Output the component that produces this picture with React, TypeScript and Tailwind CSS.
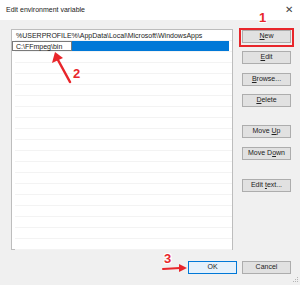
const rows = Array.from({ length: 20 });

const sideButtons: { label: React.ReactNode; mt: string }[] = [
  { label: <><u>N</u>ew</>, mt: "mt-[1px]" },
  { label: <><u>E</u>dit</>, mt: "mt-[8px]" },
  { label: <><u>B</u>rowse...</>, mt: "mt-[9px]" },
  { label: <><u>D</u>elete</>, mt: "mt-[8px]" },
  { label: <>Move <u>U</u>p</>, mt: "mt-[18px]" },
  { label: <>Move D<u>o</u>wn</>, mt: "mt-[9px]" },
  { label: <>Edit <u>t</u>ext...</>, mt: "mt-[19px]" },
];

function Btn({ children, className = "" }: { children: React.ReactNode; className?: string }) {
  return (
    <div
      className={`h-[13px] w-[49px] flex items-center justify-center border border-[#adadad] bg-[#e1e1e1] text-[7px] text-[#222] ${className}`}
    >
      <span className="whitespace-pre">{children}</span>
    </div>
  );
}

function Num({ n, className }: { n: string; className: string }) {
  return (
    <span
      className={`absolute text-[13px] font-bold leading-none text-[#e8262b] ${className}`}
      style={{ textShadow: "1px 1px 0 #fff, -1px -1px 0 #fff, 1px -1px 0 #fff, -1px 1px 0 #fff" }}
    >
      {n}
    </span>
  );
}

export default function App() {
  return (
    <div
      className="relative w-[300px] h-[285px] overflow-hidden bg-[#f0f0f0] text-[#222]"
      style={{ fontFamily: '"Liberation Sans", Arial, sans-serif' }}
    >
      {/* title bar */}
      <div className="h-[20px] bg-white flex items-center justify-between pl-[6px] pr-[7px]">
        <span className="text-[7px]">Edit environment variable</span>
        <span className="text-[10px] leading-none text-[#444]">✕</span>
      </div>

      <div className="flex pl-[11px] pt-[9px]">
        {/* list */}
        <div className="w-[222px] h-[221px] border border-[#bdbdbd] bg-white flex flex-col">
          {rows.map((_, i) => (
            <div key={i} className="h-[11px] shrink-0 border-b border-[#f3f3f3] ml-[3px] flex items-center">
              {i === 0 && (
                <span className="text-[7px] pl-[1px] leading-none">%USERPROFILE%\AppData\Local\Microsoft\WindowsApps</span>
              )}
              {i === 1 && (
                <div className="flex w-full h-[10px] -ml-[3px]">
                  <div className="w-[60px] h-full border border-[#7a7a7a] bg-white flex items-center pl-[3px] text-[7px] leading-none">
                    C:\FFmpeg\bin
                  </div>
                  <div className="flex-1 bg-[#0078d7]" />
                </div>
              )}
            </div>
          ))}
        </div>

        {/* side buttons */}
        <div className="ml-[9px] flex flex-col">
          {sideButtons.map((b, i) => (
            <Btn key={i} className={b.mt}>
              {b.label}
            </Btn>
          ))}
        </div>
      </div>

      {/* bottom buttons */}
      <div className="flex justify-end gap-[5px] pr-[9px] mt-[11px]">
        <div className="h-[13px] w-[49px] flex items-center justify-center border border-[#0078d7] bg-[#e5f1fb] text-[7px]">
          OK
        </div>
        <Btn>Cancel</Btn>
      </div>

      {/* annotations */}
      <div className="absolute left-[239px] top-[28px] w-[55px] h-[19px] border-2 border-[#e8262b]" />
      <Num n="1" className="left-[259px] top-[11px]" />
      <Num n="2" className="left-[73px] top-[67px]" />
      <Num n="3" className="left-[164px] top-[252px]" />

      <svg className="absolute left-0 top-0" width="300" height="285" viewBox="0 0 300 285">
        {/* arrow 2 */}
        <line x1="70" y1="82" x2="58" y2="60" stroke="#e8262b" strokeWidth="2.5" strokeLinecap="round" />
        <polygon points="55,52 52,63 63,58" fill="#e8262b" />
        {/* arrow 3 */}
        <line x1="163" y1="269" x2="180" y2="268" stroke="#e8262b" strokeWidth="2" strokeLinecap="round" />
        <polygon points="187,268 179,264 179,272" fill="#e8262b" />
        {/* resize grip */}
        <g fill="#b5b5b5">
          <rect x="295" y="281" width="1" height="1" />
          <rect x="297" y="279" width="1" height="1" />
          <rect x="297" y="281" width="1" height="1" />
          <rect x="293" y="281" width="1" height="1" />
          <rect x="295" y="279" width="1" height="1" />
          <rect x="297" y="277" width="1" height="1" />
        </g>
      </svg>
    </div>
  );
}
